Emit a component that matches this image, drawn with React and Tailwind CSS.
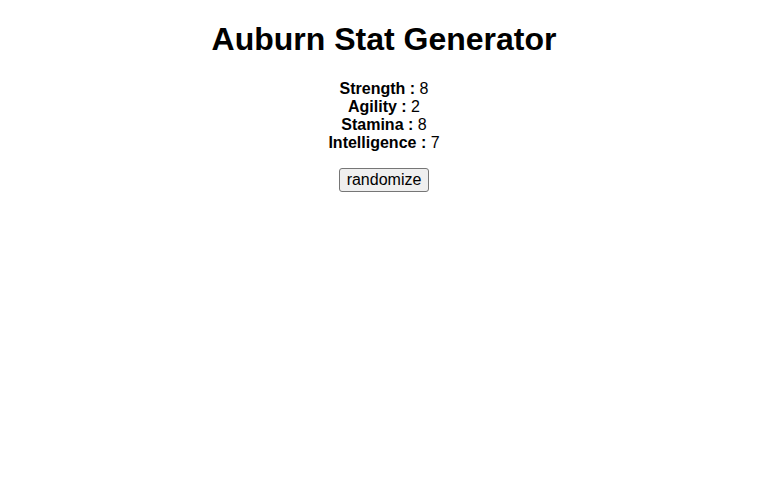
import { useState } from "react";

const rand = () => Math.floor(Math.random() * 10) + 1;

const App = () => {
  const [stats, setStats] = useState({ Strength: 8, Agility: 2, Stamina: 8, Intelligence: 7 });

  const randomize = () => {
    setStats({ Strength: rand(), Agility: rand(), Stamina: rand(), Intelligence: rand() });
  };

  return (
    <div className="text-center text-black bg-white min-h-screen font-['Liberation_Sans',Arial,sans-serif] text-base leading-[18px]">
      <h1 className="text-[32px] font-bold leading-[37px] pt-[21px] mb-[22px]">Auburn Stat Generator</h1>
      <div>
        {Object.entries(stats).map(([name, value]) => (
          <div key={name}>
            <b>{name} :</b> {value}
          </div>
        ))}
      </div>
      <div className="mt-4">
        <button
          onClick={randomize}
          className="bg-[#efefef] border border-[#767676] rounded-[3px] px-[7px] py-[2px] leading-[18px] hover:bg-[#e5e5e5]"
        >
          randomize
        </button>
      </div>
    </div>
  );
};

export default App;
